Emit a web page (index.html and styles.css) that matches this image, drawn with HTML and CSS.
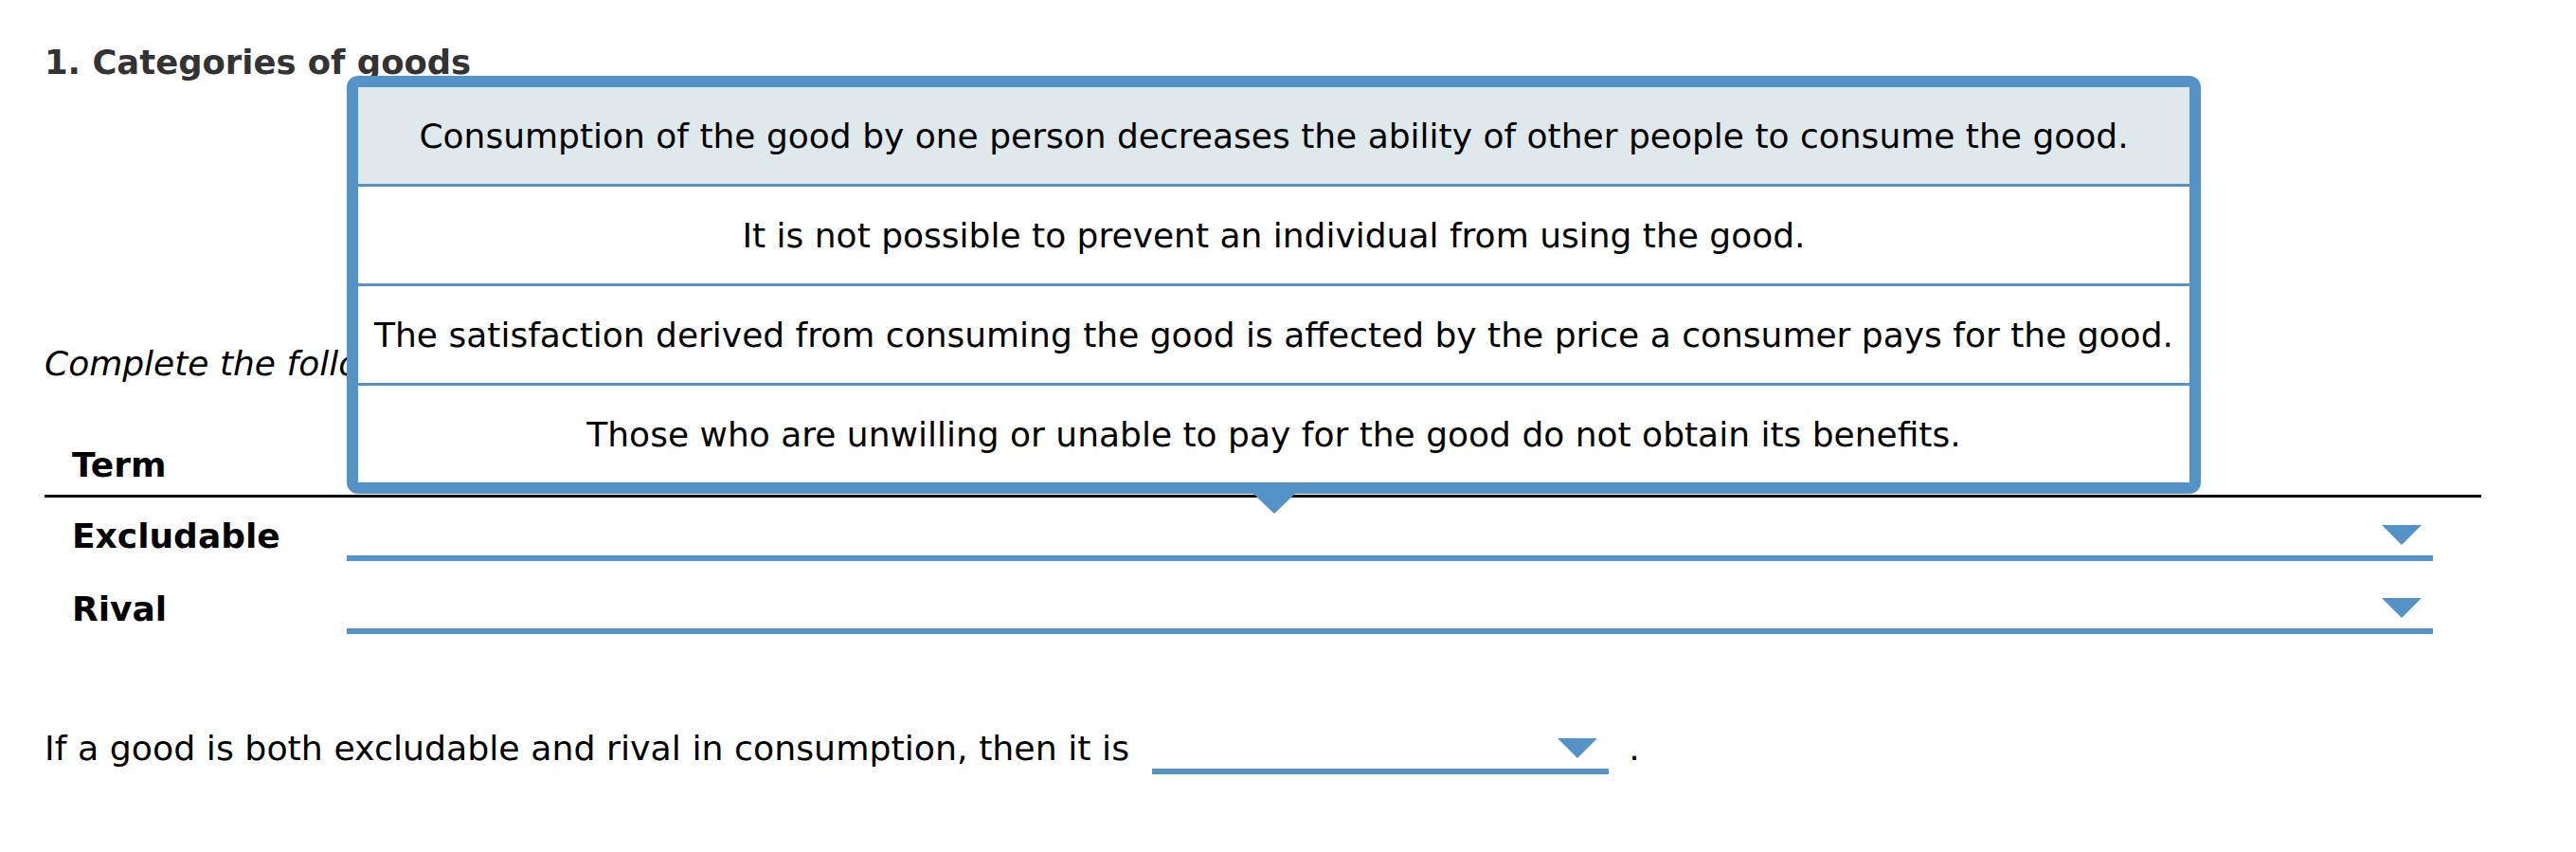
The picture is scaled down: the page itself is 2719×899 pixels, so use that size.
FILE: index.html
```html
<!DOCTYPE html>
<html lang="en">
<head>
<meta charset="utf-8">
<title>Categories of goods</title>
<link rel="stylesheet" href="styles.css">
</head>
<body>
<div class="page">
  <h1 class="title">1. Categories of goods</h1>
  <p class="intro">Complete the following table by matching each term to its definition.</p>

  <div class="table">
    <div class="row head">
      <div class="label">Term</div>
    </div>
    <div class="row">
      <div class="label">Excludable</div>
      <div class="select"><span class="arrow"></span></div>
    </div>
    <div class="row">
      <div class="label">Rival</div>
      <div class="select"><span class="arrow"></span></div>
    </div>
  </div>

  <p class="sentence">If a good is both excludable and rival in consumption, then it is <span class="inline-select"><span class="arrow"></span></span> .</p>

  <div class="popup">
    <div class="option active">Consumption of the good by one person decreases the ability of other people to consume the good.</div>
    <div class="option">It is not possible to prevent an individual from using the good.</div>
    <div class="option">The satisfaction derived from consuming the good is affected by the price a consumer pays for the good.</div>
    <div class="option">Those who are unwilling or unable to pay for the good do not obtain its benefits.</div>
  </div>
</div>
</body>
</html>
```

FILE: styles.css
```css
html, body {
  margin: 0;
  padding: 0;
  background: #ffffff;
}

.page {
  position: relative;
  padding: 46px 0 0 47px;
  font-family: "DejaVu Sans", Verdana, sans-serif;
  color: #000;
  font-size: 36px;
  line-height: 40px;
}

.title {
  margin: 0;
  font-size: 35.4px;
  line-height: 40px;
  font-weight: bold;
  color: #333333;
}

.intro {
  margin: 278px 0 0 0;
  font-style: italic;
}

.table {
  width: 2572px;
  margin-top: 67px;
}

.row {
  display: grid;
  grid-template-columns: 319px 2202px;
  height: 77px;
}

.row.head {
  height: auto;
  padding-bottom: 11px;
  border-bottom: 3px solid #000;
}

.label {
  padding-left: 29px;
  font-weight: bold;
  padding-top: 21px;
}

.row.head .label {
  padding-top: 0;
}

.select {
  position: relative;
  box-sizing: border-box;
  height: 67px;
  border-bottom: 6px solid #5493c7;
  display: flex;
  justify-content: flex-end;
  align-items: flex-end;
  padding: 0 12px 11px 0;
}

.arrow {
  display: block;
  width: 0;
  height: 0;
  border-left: 21px solid transparent;
  border-right: 21px solid transparent;
  border-top: 21px solid #5493c7;
}

.sentence {
  margin: 91px 0 0 0;
  font-size: 36.3px;
}

.inline-select {
  position: relative;
  display: inline-block;
  box-sizing: border-box;
  width: 482px;
  height: 44px;
  margin-left: 12px;
  margin-right: 10px;
  border-bottom: 6px solid #5493c7;
  vertical-align: -15px;
}

.inline-select .arrow {
  position: absolute;
  right: 12px;
  bottom: 11px;
}

.popup {
  position: absolute;
  left: 366px;
  top: 80px;
  box-sizing: border-box;
  width: 1957px;
  height: 441px;
  border: 12px solid #5493c7;
  border-radius: 12px;
  background: #ffffff;
  display: flex;
  flex-direction: column;
}

.popup::after {
  content: "";
  position: absolute;
  left: 50%;
  bottom: -33px;
  transform: translateX(-50%);
  border-left: 22px solid transparent;
  border-right: 22px solid transparent;
  border-top: 21px solid #5493c7;
}

.option {
  flex: 1;
  display: flex;
  align-items: center;
  justify-content: center;
  text-align: center;
  font-size: 36px;
  line-height: 40px;
  padding-top: 2px;
  color: #000;
}

.option + .option {
  border-top: 3px solid #5493c7;
}

.option.active {
  background: #dfe8eb;
}
```
